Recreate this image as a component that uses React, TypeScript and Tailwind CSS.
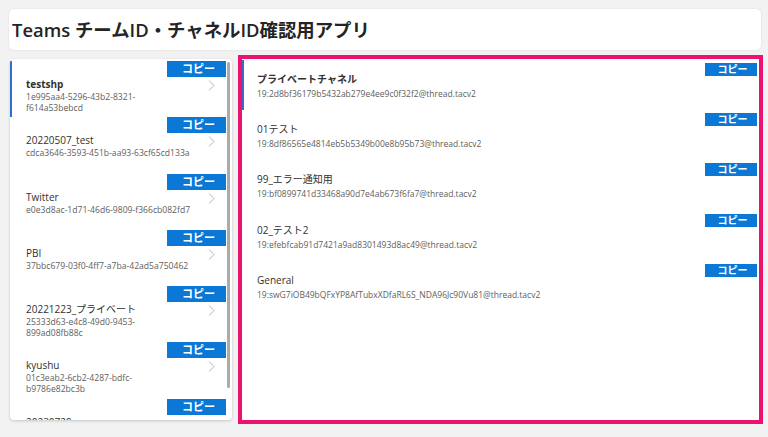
import React from "react";

type Team = { name: string; id: string[]; selected?: boolean };

const teams: Team[] = [
  { name: "testshp", id: ["1e995aa4-5296-43b2-8321-", "f614a53bebcd"], selected: true },
  { name: "20220507_test", id: ["cdca3646-3593-451b-aa93-63cf65cd133a"] },
  { name: "Twitter", id: ["e0e3d8ac-1d71-46d6-9809-f366cb082fd7"] },
  { name: "PBI", id: ["37bbc679-03f0-4ff7-a7ba-42ad5a750462"] },
  { name: "20221223_プライベート", id: ["25333d63-e4c8-49d0-9453-", "899ad08fb88c"] },
  { name: "kyushu", id: ["01c3eab2-6cb2-4287-bdfc-", "b9786e82bc3b"] },
  { name: "20230729", id: [""] },
];

const channels = [
  { name: "プライベートチャネル", id: "19:2d8bf36179b5432ab279e4ee9c0f32f2@thread.tacv2", selected: true },
  { name: "01テスト", id: "19:8df86565e4814eb5b5349b00e8b95b73@thread.tacv2" },
  { name: "99_エラー通知用", id: "19:bf0899741d33468a90d7e4ab673f6fa7@thread.tacv2" },
  { name: "02_テスト2", id: "19:efebfcab91d7421a9ad8301493d8ac49@thread.tacv2" },
  { name: "General", id: "19:swG7iOB49bQFxYP8AfTubxXDfaRL6S_NDA96Jc90Vu81@thread.tacv2" },
];

const font = {
  fontFamily: '"Open Sans", "Noto Sans CJK JP", sans-serif',
};

function Chevron() {
  return (
    <svg width="7" height="11" viewBox="0 0 7 11" fill="none">
      <polyline points="1,0.5 6,5.5 1,10.5" stroke="#b5b5b5" strokeWidth="1" />
    </svg>
  );
}

export default function App() {
  return (
    <div className="w-[768px] h-[437px] bg-[#f2f2f2] overflow-hidden pt-[9px]" style={font}>
      <div className="mx-[9px] w-[752px] h-[41px] bg-white rounded-[5px] shadow-[0_0_2px_rgba(0,0,0,0.12)] flex items-center pl-[3px]">
        <h1 className="text-[18.4px] font-semibold text-[#252423]">
          Teams チームID・チャネルID確認用アプリ
        </h1>
      </div>

      <div className="flex items-start mt-[5px] pl-[10px]">
        {/* team list */}
        <div className="mt-[4px] w-[222px] h-[361px] bg-white rounded-[4px] shadow-[0_1px_3px_rgba(0,0,0,0.18)] flex overflow-hidden">
          <div className="flex-1 pt-[2px] overflow-hidden">
            {teams.map((t) => (
              <div key={t.name} className={`h-[56.3px] flex flex-col pl-[14px] pr-[1px] border-l-[2px] ${t.selected ? "border-[#2f6fd0]" : "border-transparent"}`}>
                <div className="flex justify-end">
                  <div className="w-[59px] h-[16px] bg-[#0a78d4] text-white text-[11px] font-bold leading-[16px] text-center pl-[4px]">
                    コピー
                  </div>
                </div>
                <div className="flex items-start mt-[1px]">
                  <div className="flex-1">
                    <div className={`text-[10px] leading-[12px] text-[#323130] ${t.selected ? "font-bold" : ""}`}>{t.name}</div>
                    <div className="mt-[2px] text-[8.6px] leading-[10.5px] text-[#605e5c]">
                      {t.id.map((l, i) => (
                        <div key={i}>{l}</div>
                      ))}
                    </div>
                  </div>
                  {t.id[0] !== "" && (
                    <div className="mt-[2px] mr-[11px]">
                      <Chevron />
                    </div>
                  )}
                </div>
              </div>
            ))}
          </div>
          <div className="w-[3px] mr-[2px] pt-[3px]">
            <div className="w-[3px] h-[326px] bg-[#ababab] rounded-full" />
          </div>
        </div>

        {/* channel list */}
        <div className="ml-[6px] w-[525px] h-[369px] border-[4px] border-[#ec1370] bg-white pt-[1px]">
          {channels.map((c) => (
            <div key={c.name} className={`h-[50.2px] flex flex-col pl-[13px] border-l-[2px] ${c.selected ? "border-[#3f67c5]" : "border-transparent"}`}>
              <div className="flex justify-end pt-[3px] pr-[2px]">
                <div className="w-[52px] h-[13px] bg-[#0a78d4] text-white text-[10px] font-bold leading-[13px] text-center pl-[3px]">
                  コピー
                </div>
              </div>
              <div className={`-mt-[3px] text-[10px] leading-[12px] text-[#323130] ${c.selected ? "font-bold" : ""}`}>{c.name}</div>
              <div className="mt-[4px] text-[8.5px] leading-[10px] text-[#605e5c]">{c.id}</div>
            </div>
          ))}
        </div>
      </div>
    </div>
  );
}
